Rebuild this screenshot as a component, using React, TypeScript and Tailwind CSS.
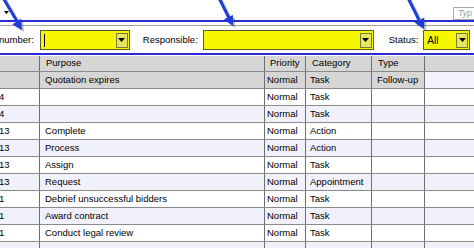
import React from 'react';

type Row = {
  id: string;
  date: string;
  purpose: string;
  priority: string;
  category: string;
  type: string;
};

const rows: Row[] = [
  { id: 'r1', date: '', purpose: 'Quotation expires', priority: 'Normal', category: 'Task', type: 'Follow-up' },
  { id: 'r2', date: '4', purpose: '', priority: 'Normal', category: 'Task', type: '' },
  { id: 'r3', date: '4', purpose: '', priority: 'Normal', category: 'Task', type: '' },
  { id: 'r4', date: '13', purpose: 'Complete', priority: 'Normal', category: 'Action', type: '' },
  { id: 'r5', date: '13', purpose: 'Process', priority: 'Normal', category: 'Action', type: '' },
  { id: 'r6', date: '13', purpose: 'Assign', priority: 'Normal', category: 'Task', type: '' },
  { id: 'r7', date: '13', purpose: 'Request', priority: 'Normal', category: 'Appointment', type: '' },
  { id: 'r8', date: '1', purpose: 'Debrief unsuccessful bidders', priority: 'Normal', category: 'Task', type: '' },
  { id: 'r9', date: '1', purpose: 'Award contract', priority: 'Normal', category: 'Task', type: '' },
  { id: 'r10', date: '1', purpose: 'Conduct legal review', priority: 'Normal', category: 'Task', type: '' },
  { id: 'r11', date: '', purpose: '', priority: '', category: '', type: '' },
];

const DropButton: React.FC = () => (
  <div className="flex h-[15px] w-[12px] items-center justify-center border border-[#7a7a40] bg-[#e6e65a]">
    <svg width="7" height="4" viewBox="0 0 7 4">
      <polygon points="0,0 7,0 3.5,4" fill="#000" />
    </svg>
  </div>
);

interface ComboProps {
  width: string;
  text?: string;
  caret?: boolean;
}

const Combo: React.FC<ComboProps> = ({ width, text, caret }) => (
  <div
    className={`flex h-[20px] items-center border border-[#5a5a3a] bg-[#f7f700] pr-[1px] ${width}`}
  >
    <div className="flex flex-1 items-center pl-[3px] text-[10px] text-black">
      {caret && <div className="h-[13px] w-[1px] bg-black" />}
      {text}
    </div>
    <DropButton />
  </div>
);

const Arrows: React.FC = () => {
  const blue = '#1d3fd8';
  const shade = 'rgba(60,60,80,0.35)';
  const arrows = [
    { line: [2, -4, 18, 23], head: '22,30 12.4,24.2 21,18.8' },
    { line: [218, -4, 229, 18], head: '233,26 224,19.3 233,14.9' },
    { line: [407, -4, 419, 20], head: '424,29 414.5,22.6 424.3,17.6' },
  ];
  return (
    <svg className="pointer-events-none absolute left-0 top-0" width="474" height="40">
      {arrows.map((a, i) => (
        <g key={`s${i}`} transform="translate(2,2)">
          <line x1={a.line[0]} y1={a.line[1]} x2={a.line[2]} y2={a.line[3]} stroke={shade} strokeWidth="3" />
          <polygon points={a.head} fill={shade} />
        </g>
      ))}
      {arrows.map((a, i) => (
        <g key={`a${i}`}>
          <line x1={a.line[0]} y1={a.line[1]} x2={a.line[2]} y2={a.line[3]} stroke={blue} strokeWidth="3" />
          <polygon points={a.head} fill={blue} />
        </g>
      ))}
    </svg>
  );
};

const cell = 'flex h-full items-center overflow-hidden whitespace-nowrap border-r border-[#6e6e6e]';

const App: React.FC = () => {
  return (
    <div
      className="relative h-[248px] w-[474px] overflow-hidden bg-white text-black"
      style={{ fontFamily: '"Liberation Sans", Arial, sans-serif' }}
    >
      {/* top strip */}
      <div className="flex h-[20px] items-start justify-between">
        <svg className="ml-[4px] mt-[11px]" width="5" height="3" viewBox="0 0 5 3">
          <polygon points="0,0 5,0 2.5,3" fill="#000" />
        </svg>
        <div className="mr-[-12px] mt-[7px] flex h-[13px] w-[33px] shrink-0 items-center border border-[#a8a8a8] pl-[4px] text-[9px] italic text-[#9a9a9a]">
          Typ
        </div>
      </div>
      <div className="h-[2px] bg-[#2a2ad8]" />
      <div className="h-[3px]" />
      <div className="h-[1px] bg-[#a0a0a0]" />

      {/* filter row */}
      <div className="flex h-[27px] items-center pt-[1px] text-[9.5px]">
        <span className="ml-[-1px]">number:</span>
        <div className="ml-[6px]">
          <Combo width="w-[90px]" caret />
        </div>
        <span className="ml-[13px]">Responsible:</span>
        <div className="ml-[5px]">
          <Combo width="w-[171px]" />
        </div>
        <span className="ml-[15px]">Status:</span>
        <div className="ml-[5px]">
          <Combo width="w-[47px]" text="All" />
        </div>
      </div>
      <div className="h-[2px] bg-[#2a2ad8]" />
      <div className="h-[1px]" />

      {/* grid */}
      <div className="text-[9.5px]">
        <div className="flex h-[16px] border-b border-[#8a8a8a] bg-[#d6d6d6]">
          <div className={`${cell} w-[40px]`} />
          <div className={`${cell} w-[225px] pl-[6px]`}>Purpose</div>
          <div className={`${cell} w-[41px] pl-[5px]`}>Priority</div>
          <div className={`${cell} w-[66px] pl-[6px]`}>Category</div>
          <div className={`${cell} w-[53px] pl-[6px]`}>Type</div>
          <div className="flex-1" />
        </div>
        {rows.map((r, i) => {
          const first = i === 0;
          const bg = first ? 'bg-[#d6d6d6]' : i % 2 === 0 ? 'bg-[#f0f1fb]' : 'bg-white';
          return (
            <div key={r.id} className={`flex h-[17px] border-b border-[#8a8a8a] ${bg}`}>
              <div className={`${cell} w-[40px] pl-0`}>
                <span className="ml-[-1px]">{r.date}</span>
              </div>
              <div className={`${cell} w-[225px] pl-[5px]`}>{r.purpose}</div>
              <div className={`${cell} w-[41px] pl-[2px]`}>{r.priority}</div>
              <div className={`${cell} w-[66px] pl-[4px]`}>{r.category}</div>
              <div className={`${cell} w-[53px] pl-[5px]`}>{r.type}</div>
              <div className={`flex-1 ${first ? 'bg-[#f4f4fc]' : ''}`} />
            </div>
          );
        })}
      </div>

      <Arrows />
    </div>
  );
};

export default App;
